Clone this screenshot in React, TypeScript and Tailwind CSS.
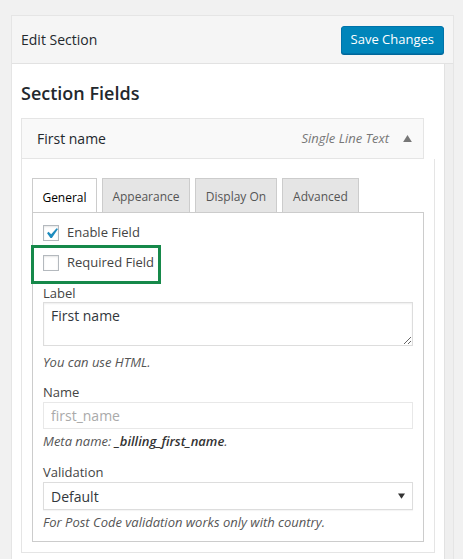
import { useState } from "react";

const TABS = [
  { name: "General", width: "w-[65px]" },
  { name: "Appearance", width: "w-[88px]" },
  { name: "Display On", width: "w-[82px]" },
  { name: "Advanced", width: "w-[77px]" },
];

function CheckRow({ label, checked }: { label: string; checked: boolean }) {
  return (
    <label className="flex h-[20px] items-center gap-[8px] text-[13px] text-[#444]">
      <span className="flex h-[16px] w-[16px] items-center justify-center overflow-visible border border-[#b4b9be] bg-white shadow-[inset_0_1px_2px_rgba(0,0,0,0.1)]">
        {checked ? (
          <svg viewBox="0 0 20 20" className="-m-[3px] h-[21px] w-[21px] shrink-0">
            <path d="M14.83 4.89l1.34.94-5.81 8.38H9.02L5.78 9.67l1.34-1.25 2.57 2.4z" fill="#1e8cbe" />
          </svg>
        ) : null}
      </span>
      {label}
    </label>
  );
}

export default function App() {
  const [tab, setTab] = useState("General");

  return (
    <div
      className="min-h-screen bg-[#f1f1f1] pl-[11px] pr-[9px] pt-[15px] text-[#23282d]"
      style={{ fontFamily: '"Open Sans", "Noto Sans", sans-serif' }}
    >
      <div className="border border-[#e5e5e5]">
        {/* panel header */}
        <div className="flex h-[48px] items-center justify-between border-b border-[#e2e2e2] bg-[#f5f5f5] px-[9px]">
          <h2 className="text-[14px] text-[#23282d]">Edit Section</h2>
          <button
            type="button"
            className="h-[28px] rounded-[3px] border border-[#0073aa] bg-[#0085ba] px-[9px] text-[13px] text-white shadow-[0_1px_0_#006799]"
          >
            Save Changes
          </button>
        </div>

        <div className="flex">
          <div className="flex-1 bg-white pb-[20px] pl-[9px] pr-[9px]">
            <h3 className="mb-[13px] pt-[17px] text-[18px] font-semibold leading-[24px] text-[#23282d]">
              Section Fields
            </h3>

            {/* field card header */}
            <div className="flex h-[41px] w-[403px] items-center border border-[#e5e5e5] bg-[#f9f9f9] pl-[15px] pr-[11px]">
              <span className="text-[14px] text-[#23282d]">First name</span>
              <span className="ml-auto text-[13px] italic text-[#777]">Single Line Text</span>
              <svg viewBox="0 0 10 8" className="ml-[14px] h-[7px] w-[9px]">
                <path d="M5 0L10 8H0z" fill="#777" />
              </svg>
            </div>

            {/* field card body */}
            <div className="w-[414px] border-x border-b border-[#e5e5e5] px-[10px] pb-[10px] pt-[19px]">
              <div className="flex gap-[5px]">
                {TABS.map((t) => (
                  <button
                    key={t.name}
                    type="button"
                    onClick={() => setTab(t.name)}
                    className={
                      t.name === tab
                        ? `relative -mb-px h-[35px] ${t.width} border border-b-0 border-[#ccc] bg-white pt-[3px] text-[12px] text-[#000]`
                        : `h-[34px] ${t.width} border border-b-0 border-[#ccc] bg-[#e5e5e5] pt-[3px] text-[12px] text-[#555]`
                    }
                  >
                    {t.name}
                  </button>
                ))}
              </div>

              <div className="relative border border-[#ccc] px-[10px] pb-[9px] pt-[10px]">
                <CheckRow label="Enable Field" checked />
                <div className="mt-[10px]">
                  <CheckRow label="Required Field" checked={false} />
                </div>
                {/* highlight around the required toggle */}
                <div className="pointer-events-none absolute left-[-2px] top-[32px] h-[39px] w-[130px] border-[3px] border-[#16894a]" />

                <div className="mt-[11px] text-[13px] leading-[18px] text-[#444]">Label</div>
                <textarea
                  readOnly
                  defaultValue="First name"
                  className="block h-[44px] w-full resize-y border border-[#ddd] px-[7px] py-[3px] text-[14px] leading-[20px] text-[#32373c] shadow-[inset_0_1px_2px_rgba(0,0,0,0.07)] outline-none"
                />
                <p className="mt-[6px] text-[13px] italic leading-[20px] text-[#555]">You can use HTML.</p>

                <div className="mt-[11px] text-[13px] leading-[18px] text-[#444]">Name</div>
                <input
                  readOnly
                  placeholder="first_name"
                  className="mt-[1px] block h-[27px] w-full border border-[#e8e8e8] px-[7px] text-[14px] text-[#32373c] outline-none placeholder:text-[#aaa]"
                />
                <p className="mt-[2px] text-[13px] italic leading-[20px] text-[#555]">
                  Meta name: <strong className="font-semibold text-[#333]">_billing_first_name</strong>.
                </p>

                <div className="mt-[12px] text-[13px] leading-[18px] text-[#444]">Validation</div>
                <div className="mt-[1px] flex h-[28px] w-full items-center border border-[#ddd] pl-[7px] pr-[7px] text-[14px] text-[#32373c] shadow-[0_1px_1px_rgba(0,0,0,0.04)]">
                  Default
                  <svg viewBox="0 0 8 6" className="ml-auto h-[6px] w-[7px]">
                    <path d="M0 0H8L4 6z" fill="#333" />
                  </svg>
                </div>
                <p className="mt-[2px] text-[13px] italic leading-[20px] text-[#555]">
                  For Post Code validation works only with country.
                </p>
              </div>
            </div>
          </div>
          <div className="w-[10px] border-l border-[#e2e2e2] bg-[#efefef]" />
        </div>
      </div>
    </div>
  );
}
